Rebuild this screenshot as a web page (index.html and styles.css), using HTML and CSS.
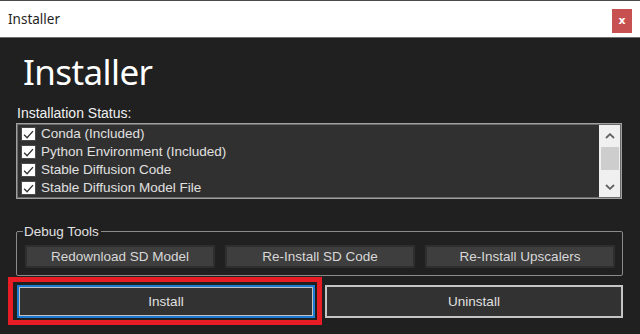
FILE: index.html
```html
<!DOCTYPE html>
<html>
<head>
<meta charset="utf-8">
<link rel="stylesheet" href="styles.css">
</head>
<body>
<div class="window">
  <div class="titlebar">
    <span class="title">Installer</span>
    <div class="close">x</div>
  </div>
  <div class="content">
    <h1 class="heading">Installer</h1>
    <div class="status-label">Installation Status:</div>
    <div class="listbox">
      <ul class="items">
        <li class="item"><span class="check"><svg viewBox="0 0 14 14" width="14" height="14"><path d="M2.3 7.3 L5.5 10.5 L11.8 3.4" fill="none" stroke="#333" stroke-width="1.5"/></svg></span><span class="label">Conda (Included)</span></li>
        <li class="item"><span class="check"><svg viewBox="0 0 14 14" width="14" height="14"><path d="M2.3 7.3 L5.5 10.5 L11.8 3.4" fill="none" stroke="#333" stroke-width="1.5"/></svg></span><span class="label">Python Environment (Included)</span></li>
        <li class="item"><span class="check"><svg viewBox="0 0 14 14" width="14" height="14"><path d="M2.3 7.3 L5.5 10.5 L11.8 3.4" fill="none" stroke="#333" stroke-width="1.5"/></svg></span><span class="label">Stable Diffusion Code</span></li>
        <li class="item"><span class="check"><svg viewBox="0 0 14 14" width="14" height="14"><path d="M2.3 7.3 L5.5 10.5 L11.8 3.4" fill="none" stroke="#333" stroke-width="1.5"/></svg></span><span class="label">Stable Diffusion Model File</span></li>
      </ul>
      <div class="scrollbar">
        <div class="arrow"><svg viewBox="0 0 10 6" width="10" height="6"><path d="M1 5 L5 1.2 L9 5" fill="none" stroke="#606060" stroke-width="1.8"/></svg></div>
        <div class="track"><div class="thumb"></div></div>
        <div class="arrow"><svg viewBox="0 0 10 6" width="10" height="6"><path d="M1 1 L5 4.8 L9 1" fill="none" stroke="#606060" stroke-width="1.8"/></svg></div>
      </div>
    </div>
    <fieldset class="debug">
      <legend class="legend">Debug Tools</legend>
      <div class="debug-buttons">
        <button class="dbtn">Redownload SD Model</button>
        <button class="dbtn">Re-Install SD Code</button>
        <button class="dbtn">Re-Install Upscalers</button>
      </div>
    </fieldset>
    <div class="actions">
      <button class="btn install">Install</button>
      <button class="btn uninstall">Uninstall</button>
      <div class="highlight"></div>
    </div>
  </div>
</div>
</body>
</html>
```

FILE: styles.css
```css
* { box-sizing: border-box; }
html, body { margin: 0; padding: 0; }
body {
  width: 640px;
  height: 334px;
  background: #202020;
  overflow: hidden;
  font-family: "Liberation Sans", Arial, sans-serif;
}
.window { width: 640px; height: 334px; display: flex; flex-direction: column; }
.titlebar {
  height: 38px;
  background: #ffffff;
  border-top: 1px solid #4a4a4a;
  border-bottom: 1px solid #707070;
  display: flex;
  align-items: center;
  justify-content: space-between;
  padding: 0 8px 0 8px;
}
.title {
  font-family: "Noto Sans", sans-serif;
  font-size: 13.5px;
  color: #1e1e1e;
  margin-top: -1px;
}
.close {
  width: 20px;
  height: 24px;
  background: #c75050;
  color: #ffffff;
  font-family: "DejaVu Sans", sans-serif;
  font-weight: bold;
  font-size: 11px;
  display: flex;
  align-items: center;
  justify-content: center;
  margin-top: 3px;
}
.content {
  flex: 1;
  padding: 0 17px 0 16px;
  display: flex;
  flex-direction: column;
}
.heading {
  margin: 0;
  padding-top: 10px;
  height: 58px;
  line-height: 48px;
  font-family: "Noto Sans", sans-serif;
  font-weight: 400;
  font-size: 35px;
  letter-spacing: -0.6px;
  color: #ffffff;
  padding-left: 7px;
}
.status-label {
  margin-top: 10px;
  height: 17px;
  line-height: 15px;
  font-size: 14px;
  color: #f0f0f0;
  padding-left: 1px;
}
.listbox {
  height: 76px;
  margin-right: 1px;
  border: 1px solid #a0a0a0;
  box-shadow: inset 0 0 0 1px #6a6a6a;
  background: #303030;
  display: flex;
  padding: 1px;
}
.items {
  list-style: none;
  margin: 0;
  padding: 0;
  flex: 1;
}
.item {
  height: 18px;
  display: flex;
  align-items: center;
  padding-left: 3px;
}
.check {
  width: 15px;
  height: 14px;
  background: #ffffff;
  border: 1px solid #4a4a4a;
  display: flex;
  align-items: center;
  justify-content: center;
  margin-right: 5px;
}
.check svg { display: block; width: 13px; height: 13px; }
.label {
  font-family: "Liberation Sans", sans-serif;
  font-size: 13.5px;
  color: #e0e0e0;
  line-height: 18px;
}
.scrollbar {
  width: 21px;
  background: #f0f0f0;
  display: flex;
  flex-direction: column;
}
.arrow {
  height: 21px;
  display: flex;
  align-items: center;
  justify-content: center;
}
.arrow svg { display: block; }
.track { flex: 1; padding: 1px 1px 0 2px; }
.thumb { height: 23px; background: #cdcdcd; }
.debug {
  margin: 25px 0 0 0;
  padding: 6px 7px 7px 8px;
  border: 1px solid #8a8a8a;
  border-radius: 2px;
}
.legend {
  padding: 0 2px 0 1px;
  margin-left: -2px;
  font-size: 13.5px;
  line-height: 15px;
  color: #e0e0e0;
}
.debug-buttons { display: flex; gap: 10px; }
.dbtn {
  flex: 1;
  height: 23px;
  background: #3e3e3e;
  border: 2px solid #2e2e2e;
  color: #d8d8d8;
  font-family: "Liberation Sans", sans-serif;
  font-size: 13.5px;
  padding: 0;
}
.actions {
  position: relative;
  margin-top: 9px;
  padding-left: 1px;
  display: flex;
  gap: 10px;
}
.btn {
  flex: 1;
  height: 33px;
  background: #323232;
  color: #e0e0e0;
  font-family: "Liberation Sans", sans-serif;
  font-size: 13.5px;
  padding: 0;
}
.install {
  border: 2px solid #1a7ad4;
  box-shadow: inset 0 0 0 1px #c0c0c0;
}
.uninstall {
  border: 2px solid #c4c4c4;
}
.highlight {
  position: absolute;
  left: -8px;
  top: -8px;
  width: 314px;
  height: 48px;
  border: 5px solid #e81c24;
  pointer-events: none;
}
```
